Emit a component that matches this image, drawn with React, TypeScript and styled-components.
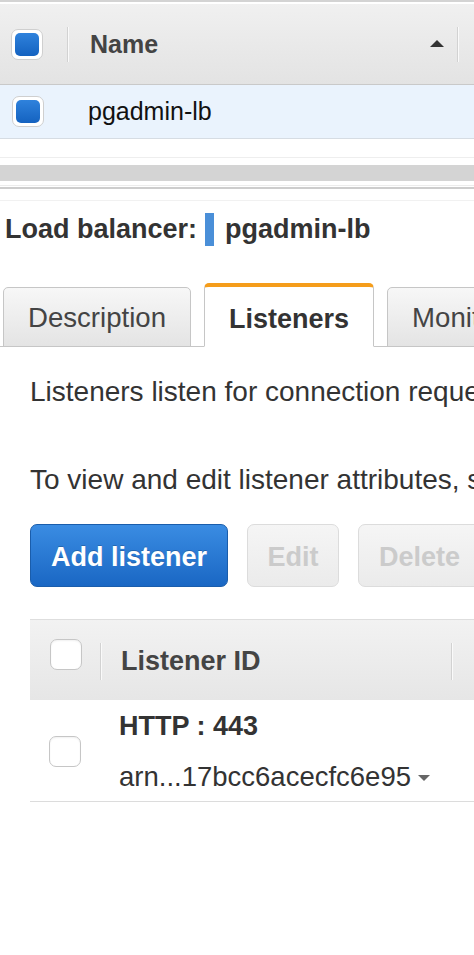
import React from "react";
import styled, { createGlobalStyle } from "styled-components";

const GlobalStyle = createGlobalStyle`
  html, body { margin: 0; padding: 0; background: #fff; }
  body {
    font-family: "Liberation Sans", Arial, Helvetica, sans-serif;
    color: #333;
    overflow: hidden;
  }
  * { box-sizing: border-box; }
`;

const Page = styled.div`
  width: 474px;
  height: 955px;
  overflow: hidden;
  display: flex;
  flex-direction: column;
`;

const TopRule = styled.div`
  height: 2px;
  background: #d3d3d3;
  margin-bottom: 2px;
`;

const GridHeader = styled.div`
  display: flex;
  align-items: center;
  height: 81px;
  background: linear-gradient(#f0f0f0, #e3e3e3);
  border-bottom: 1px solid #c9c9c9;
`;

const CheckCell = styled.div<{ $w: number; $pl: number }>`
  width: ${(p) => p.$w}px;
  padding-left: ${(p) => p.$pl}px;
  flex: none;
  display: flex;
  align-items: center;
`;

const ColDivider = styled.div<{ $h: number }>`
  flex: none;
  width: 2px;
  height: ${(p) => p.$h}px;
  border-left: 1px solid #d2d2d2;
  border-right: 1px solid #fafafa;
`;

const HeadLabel = styled.div<{ $pl: number; $size: number }>`
  flex: 1;
  display: flex;
  align-items: center;
  justify-content: space-between;
  padding-left: ${(p) => p.$pl}px;
  padding-right: 13px;
  font-weight: bold;
  font-size: ${(p) => p.$size}px;
  color: #444;
  white-space: nowrap;
`;

const SortUp = styled.span`
  width: 0;
  height: 0;
  border-left: 7px solid transparent;
  border-right: 7px solid transparent;
  border-bottom: 7px solid #333;
  margin-top: -2px;
`;

const TailCell = styled.div<{ $w: number }>`
  width: ${(p) => p.$w}px;
  flex: none;
`;

const SelectedRow = styled.div`
  display: flex;
  align-items: center;
  height: 54px;
  background: #eaf3fd;
  border-bottom: 1px solid #d6dce3;
  font-size: 25px;
  color: #111;
`;

const CheckBox = styled.div<{ $checked?: boolean }>`
  width: 32px;
  height: 31px;
  flex: none;
  border: 1px solid ${(p) => (p.$checked ? "#cfcfcf" : "#c6c6c6")};
  border-radius: 7px;
  background: #fff;
  padding: 3px;
  box-shadow: ${(p) => (p.$checked ? "none" : "inset 0 1px 2px rgba(0,0,0,0.06)")};
  &::after {
    content: "";
    display: ${(p) => (p.$checked ? "block" : "none")};
    width: 100%;
    height: 100%;
    border-radius: 5px;
    background: linear-gradient(#2f82dc, #1462c0);
  }
`;

const RowText = styled.div`
  padding-left: 44px;
`;

const ScrollZone = styled.div`
  display: flex;
  flex-direction: column;
  padding-top: 18px;
`;

const HLine = styled.div<{ $h: number; $c: string; $mb: number }>`
  height: ${(p) => p.$h}px;
  background: ${(p) => p.$c};
  margin-bottom: ${(p) => p.$mb}px;
`;

const Heading = styled.div`
  display: flex;
  align-items: center;
  height: 56px;
  padding-left: 5px;
  font-size: 27px;
  font-weight: bold;
  color: #333;
  white-space: nowrap;
`;

const NameBar = styled.span`
  width: 9px;
  height: 33px;
  background: #4a8fd8;
  margin: 0 11px 0 8px;
`;

const TabBar = styled.div`
  display: flex;
  align-items: flex-end;
  gap: 13px;
  margin-top: 26px;
  padding-left: 3px;
  border-bottom: 1px solid #c6c6c6;
  white-space: nowrap;
`;

const Tab = styled.div<{ $active?: boolean }>`
  flex: none;
  margin-bottom: -1px;
  padding: 0 24px;
  height: ${(p) => (p.$active ? 64 : 60)}px;
  display: flex;
  align-items: center;
  padding-top: ${(p) => (p.$active ? 5 : 2)}px;
  font-size: ${(p) => (p.$active ? 27 : 27.6)}px;
  font-weight: ${(p) => (p.$active ? "bold" : "normal")};
  color: ${(p) => (p.$active ? "#333" : "#444")};
  border: 1px solid #c6c6c6;
  border-top: ${(p) => (p.$active ? "4px solid #f59d1b" : "1px solid #c6c6c6")};
  border-bottom-color: ${(p) => (p.$active ? "#fff" : "#c6c6c6")};
  border-radius: 5px 5px 0 0;
  background: ${(p) => (p.$active ? "#fff" : "linear-gradient(#f7f7f7, #e4e4e4)")};
`;

const Content = styled.div`
  padding-left: 30px;
  display: flex;
  flex-direction: column;
`;

const Para = styled.p<{ $mt: number }>`
  margin: ${(p) => p.$mt}px 0 0;
  font-size: 28px;
  line-height: 32px;
  color: #333;
  white-space: nowrap;
`;

const ButtonRow = styled.div`
  display: flex;
  gap: 19px;
  margin-top: 28px;
  white-space: nowrap;
`;

const Button = styled.div<{ $primary?: boolean; $w?: number }>`
  flex: none;
  height: 63px;
  padding: 3px 20px 0;
  ${(p) => (p.$w ? `width: ${p.$w}px;` : "")}
  display: flex;
  align-items: center;
  justify-content: center;
  border-radius: 7px;
  font-size: 27px;
  font-weight: bold;
  border: 1px solid ${(p) => (p.$primary ? "#1a5dab" : "#dcdcdc")};
  color: ${(p) => (p.$primary ? "#fff" : "#cbcbcb")};
  background: ${(p) =>
    p.$primary ? "linear-gradient(#3a8ce2, #1a67c4)" : "linear-gradient(#f5f5f5, #ebebeb)"};
  text-shadow: ${(p) => (p.$primary ? "0 -1px 0 rgba(0,0,0,0.2)" : "none")};
`;

const ListTable = styled.div`
  margin-top: 32px;
  width: 470px;
`;

const ListHeader = styled.div`
  display: flex;
  align-items: center;
  height: 81px;
  padding-top: 2px;
  border-top: 1px solid #dedede;
  background: linear-gradient(#f2f2f2, #e6e6e6);
`;

const HeaderCheck = styled.div`
  width: 70px;
  padding-left: 20px;
  flex: none;
  margin-top: -13px;
`;

const ListRow = styled.div`
  display: flex;
  align-items: center;
  padding: 10px 0 8px;
  border-bottom: 1px solid #dcdcdc;
`;

const RowCheck = styled.div`
  width: 89px;
  padding-left: 19px;
  flex: none;
`;

const Lines = styled.div`
  display: flex;
  flex-direction: column;
  gap: 18px;
  font-size: 27.5px;
  line-height: 32px;
  color: #333;
  white-space: nowrap;
`;

const Strong = styled.div`
  font-weight: bold;
  font-size: 27px;
`;

const ArnLine = styled.div`
  display: flex;
  align-items: center;
  padding-top: 1px;
`;

const Caret = styled.span`
  width: 0;
  height: 0;
  margin-left: 7px;
  margin-top: 2px;
  border-left: 6px solid transparent;
  border-right: 6px solid transparent;
  border-top: 6px solid #666;
`;

export default function App() {
  return (
    <>
      <GlobalStyle />
      <Page>
        <TopRule />
        <GridHeader>
          <CheckCell $w={67} $pl={11}>
            <CheckBox $checked />
          </CheckCell>
          <ColDivider $h={35} />
          <HeadLabel $pl={21} $size={25}>
            Name
            <SortUp />
          </HeadLabel>
          <ColDivider $h={35} />
          <TailCell $w={15} />
        </GridHeader>
        <SelectedRow>
          <CheckCell $w={44} $pl={12}>
            <CheckBox $checked />
          </CheckCell>
          <RowText>pgadmin-lb</RowText>
        </SelectedRow>
        <ScrollZone>
          <HLine $h={1} $c="#eeeeee" $mb={7} />
          <HLine $h={16} $c="#d4d4d4" $mb={4} />
          <HLine $h={1} $c="#ececec" $mb={1} />
          <HLine $h={2} $c="#cdcdcd" $mb={11} />
          <HLine $h={1} $c="#f1f1f1" $mb={0} />
        </ScrollZone>
        <Heading>
          Load balancer:
          <NameBar />
          pgadmin-lb
        </Heading>
        <TabBar>
          <Tab>Description</Tab>
          <Tab $active>Listeners</Tab>
          <Tab>Monitoring</Tab>
        </TabBar>
        <Content>
          <Para $mt={29}>Listeners listen for connection requests using the protocol and port you configure.</Para>
          <Para $mt={56}>To view and edit listener attributes, select a listener.</Para>
          <ButtonRow>
            <Button $primary $w={198}>Add listener</Button>
            <Button $w={92}>Edit</Button>
            <Button>Delete</Button>
          </ButtonRow>
          <ListTable>
            <ListHeader>
              <HeaderCheck>
                <CheckBox />
              </HeaderCheck>
              <ColDivider $h={37} />
              <HeadLabel $pl={19} $size={27}>
                Listener ID
              </HeadLabel>
              <ColDivider $h={37} />
              <TailCell $w={47} />
            </ListHeader>
            <ListRow>
              <RowCheck>
                <CheckBox />
              </RowCheck>
              <Lines>
                <Strong>HTTP : 443</Strong>
                <ArnLine>
                  arn...17bcc6acecfc6e95
                  <Caret />
                </ArnLine>
              </Lines>
            </ListRow>
          </ListTable>
        </Content>
      </Page>
    </>
  );
}
